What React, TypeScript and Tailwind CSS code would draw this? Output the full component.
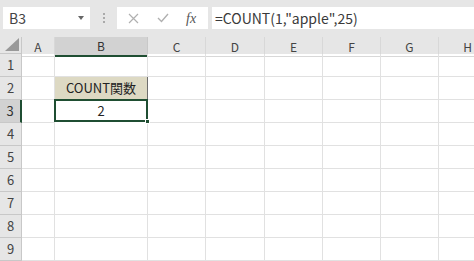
import React from 'react';

const cols = ['A', 'B', 'C', 'D', 'E', 'F', 'G', 'H'];
const rows = [1, 2, 3, 4, 5, 6, 7, 8, 9];
const grid = 'grid grid-cols-[22px_33px_93px_58px_59px_58px_58px_58px_58px]';

const Cell: React.FC<{ row: number; col: string }> = ({ row, col }) => {
    if (col === 'B' && row === 2) {
        return (
            <div className="h-[23px] bg-[#ddd9c3] border-r border-b border-[#6d6d6d] flex items-center justify-center text-[13px] text-[#222]">
                COUNT関数
            </div>
        );
    }
    if (col === 'B' && row === 3) {
        return (
            <div className="relative h-[23px] border-2 border-[#1f4e32] -ml-px -mt-px flex items-center justify-center text-[13px] text-[#222]">
                2
                <span className="absolute -right-[4px] -bottom-[4px] w-[5px] h-[5px] bg-[#1f4e32] border border-white" />
            </div>
        );
    }
    return <div className="h-[23px] border-r border-b border-[#e1e1e1]" />;
};

export default function App() {
    return (
        <div className="w-[474px] h-[261px] overflow-hidden bg-white" style={{ fontFamily: '"Noto Sans CJK JP", "Noto Sans", sans-serif' }}>
            {/* formula bar */}
            <div className="h-[37px] bg-[#e6e6e6] flex items-start pt-[7px] pl-[3px]">
                <div className="w-[87px] h-[22px] bg-white flex items-center justify-between pl-[6px] pr-[6px] text-[14px] text-[#444]">
                    <span>B3</span>
                    <span className="w-0 h-0 border-l-[3px] border-r-[3px] border-t-[4px] border-l-transparent border-r-transparent border-t-[#666]" />
                </div>
                <div className="w-[27px] h-[22px] flex flex-col items-center justify-center gap-[2px]">
                    <span className="w-[2px] h-[2px] bg-[#aaa]" />
                    <span className="w-[2px] h-[2px] bg-[#aaa]" />
                    <span className="w-[2px] h-[2px] bg-[#aaa]" />
                </div>
                <div className="w-[91px] h-[22px] bg-white flex items-center pl-[10px] text-[#aaa]">
                    <svg width="11" height="11" viewBox="0 0 11 11" className="ml-[1px]">
                        <path d="M1 1 L10 10 M10 1 L1 10" stroke="#b0b0b0" strokeWidth="1.2" fill="none" />
                    </svg>
                    <svg width="12" height="10" viewBox="0 0 12 10" className="ml-[18px]">
                        <path d="M1 5 L4.5 8.5 L11 1" stroke="#b0b0b0" strokeWidth="1.4" fill="none" />
                    </svg>
                    <span className="ml-[17px] italic text-[14px] text-[#555]" style={{ fontFamily: '"Liberation Serif", serif' }}>fx</span>
                </div>
                <div className="flex-1 h-[22px] bg-white ml-[4px] flex items-center pl-[3px] text-[14px] text-[#3a3a3a]">
                    =COUNT(1,"apple",25)
                </div>
            </div>
            {/* column headers */}
            <div className={`${grid} h-[17px] bg-[#e6e6e6]`}>
                <div className="h-[17px] border-r border-b border-[#c8c8c8] flex justify-end items-end pr-[2px] pb-[2px]">
                    <svg width="14" height="13" viewBox="0 0 14 13" className="shrink-0 block">
                        <polygon points="14,0 14,13 0,13" fill="#999999" />
                    </svg>
                </div>
                {cols.map((c) => (
                    <div
                        key={c}
                        className={
                            c === 'B'
                                ? 'bg-[#d2d2d2] border-r border-[#c8c8c8] border-b-2 border-b-[#1f4e32] flex items-center justify-center text-[12px] text-[#333]'
                                : 'border-r border-b border-[#d8d8d8] flex items-center justify-center text-[12px] text-[#444]'
                        }
                    >
                        {c}
                    </div>
                ))}
            </div>
            {/* rows */}
            {rows.map((r) => (
                <div key={r} className={grid}>
                    <div
                        className={
                            r === 3
                                ? 'h-[23px] bg-[#d2d2d2] border-r-2 border-r-[#1f4e32] border-b border-[#c8c8c8] flex items-center justify-center text-[13px] text-[#333]'
                                : 'h-[23px] bg-[#e6e6e6] border-r border-b border-[#c8c8c8] flex items-center justify-center text-[13px] text-[#444]'
                        }
                    >
                        {r}
                    </div>
                    {cols.map((c) => (
                        <Cell key={c} row={r} col={c} />
                    ))}
                </div>
            ))}
        </div>
    );
}
